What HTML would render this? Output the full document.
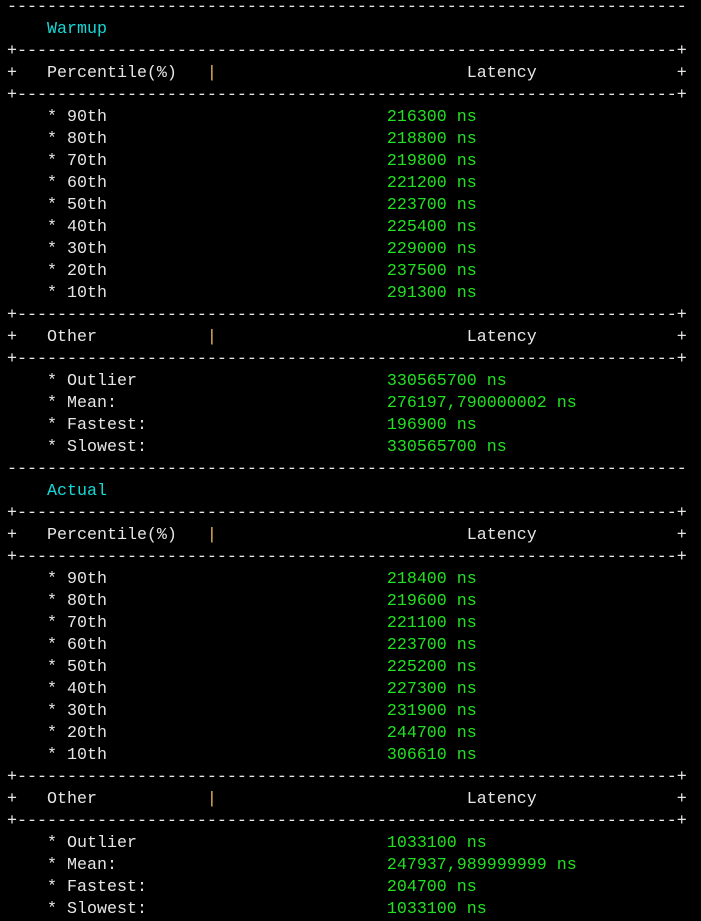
<!DOCTYPE html>
<html><head><meta charset="utf-8"><style>
html,body{margin:0;padding:0;background:#000;width:701px;height:919px;overflow:hidden}
pre{margin:0;position:absolute;left:7px;top:-3px;font-family:"Liberation Mono",monospace;font-size:16.67px;line-height:22px;color:#e6e6e6}
.c{color:#16d8d8}.g{color:#22e022}.y{color:#e8b860}
</style></head><body><pre>--------------------------------------------------------------------
    <span class="c">Warmup</span>
+------------------------------------------------------------------+
+   Percentile(%)   <span class="y">|</span>                         Latency              +
+------------------------------------------------------------------+
    * 90th                            <span class="g">216300 ns</span>
    * 80th                            <span class="g">218800 ns</span>
    * 70th                            <span class="g">219800 ns</span>
    * 60th                            <span class="g">221200 ns</span>
    * 50th                            <span class="g">223700 ns</span>
    * 40th                            <span class="g">225400 ns</span>
    * 30th                            <span class="g">229000 ns</span>
    * 20th                            <span class="g">237500 ns</span>
    * 10th                            <span class="g">291300 ns</span>
+------------------------------------------------------------------+
+   Other           <span class="y">|</span>                         Latency              +
+------------------------------------------------------------------+
    * Outlier                         <span class="g">330565700 ns</span>
    * Mean:                           <span class="g">276197,790000002 ns</span>
    * Fastest:                        <span class="g">196900 ns</span>
    * Slowest:                        <span class="g">330565700 ns</span>
--------------------------------------------------------------------
    <span class="c">Actual</span>
+------------------------------------------------------------------+
+   Percentile(%)   <span class="y">|</span>                         Latency              +
+------------------------------------------------------------------+
    * 90th                            <span class="g">218400 ns</span>
    * 80th                            <span class="g">219600 ns</span>
    * 70th                            <span class="g">221100 ns</span>
    * 60th                            <span class="g">223700 ns</span>
    * 50th                            <span class="g">225200 ns</span>
    * 40th                            <span class="g">227300 ns</span>
    * 30th                            <span class="g">231900 ns</span>
    * 20th                            <span class="g">244700 ns</span>
    * 10th                            <span class="g">306610 ns</span>
+------------------------------------------------------------------+
+   Other           <span class="y">|</span>                         Latency              +
+------------------------------------------------------------------+
    * Outlier                         <span class="g">1033100 ns</span>
    * Mean:                           <span class="g">247937,989999999 ns</span>
    * Fastest:                        <span class="g">204700 ns</span>
    * Slowest:                        <span class="g">1033100 ns</span>
</pre></body></html>
